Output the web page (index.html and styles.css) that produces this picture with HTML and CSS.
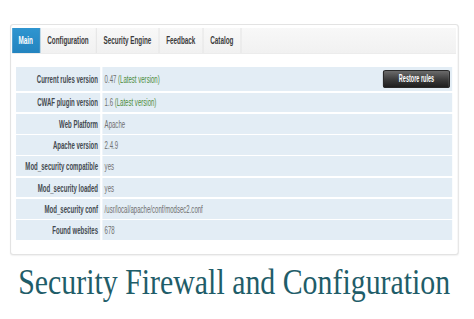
FILE: index.html
```html
<!DOCTYPE html>
<html>
<head>
<meta charset="utf-8">
<link rel="stylesheet" href="styles.css">
</head>
<body>
<div class="frame">
  <div class="panel">
    <div class="tabs">
      <div class="tab active">Main</div>
      <div class="tab">Configuration</div>
      <div class="tab">Security Engine</div>
      <div class="tab">Feedback</div>
      <div class="tab">Catalog</div>
      <div class="tab-fill"></div>
    </div>
    <div class="content">
      <div class="info">
        <div class="label first">Current rules version</div>
        <div class="value first"><span>0.47 <span class="ok">(Latest version)</span></span><button class="btn">Restore rules</button></div>
        <div class="label">CWAF plugin version</div>
        <div class="value">1.6 <span class="ok">&nbsp;(Latest version)</span></div>
        <div class="label">Web Platform</div>
        <div class="value">Apache</div>
        <div class="label">Apache version</div>
        <div class="value">2.4.9</div>
        <div class="label">Mod_security compatible</div>
        <div class="value">yes</div>
        <div class="label">Mod_security loaded</div>
        <div class="value">yes</div>
        <div class="label">Mod_security conf</div>
        <div class="value">/usr/local/apache/conf/modsec2.conf</div>
        <div class="label">Found websites</div>
        <div class="value">678</div>
      </div>
    </div>
  </div>
</div>
<h1 class="title"><span class="title-text">Security Firewall and Configuration</span></h1>
</body>
</html>
```

FILE: styles.css
```css
html, body {
  margin: 0;
  padding: 0;
  background: #ffffff;
  overflow: hidden;
}

body {
  padding: 24px 15px 0 10px;
  font-family: "Liberation Sans", Arial, sans-serif;
}

.frame {
  width: 816px;
  transform: scaleX(0.55);
  transform-origin: 0 0;
}

.panel {
  box-sizing: border-box;
  width: 816px;
  border-style: solid;
  border-color: #e3e3e3;
  border-width: 1px 2px;
  border-radius: 6px / 3px;
  padding: 3px 3px 0 2px;
  background: #fff;
  box-shadow: 0 1px 2px rgba(0, 0, 0, 0.06);
}

.tabs {
  display: flex;
  height: 26px;
  background: linear-gradient(#f8f8f8, #f1f1f1);
  border-bottom: 1px solid #ececec;
  box-sizing: border-box;
}

.tab {
  padding: 0 12.5px;
  font-size: 11.5px;
  font-weight: bold;
  line-height: 25px;
  color: #3b3b3b;
  border-right: 2px solid #e6e6e6;
  white-space: nowrap;
}

.tab.active {
  padding: 0 11.5px;
  background: linear-gradient(#2f95d0, #2384bf);
  color: #ffffff;
  border-right-color: #2384bf;
}

.tab-fill {
  flex: 1;
}

.content {
  padding: 13px 7px 14px 7px;
}

.info {
  display: grid;
  grid-template-columns: 153px 1fr;
  grid-template-rows: 24px repeat(7, 19.8px);
  column-gap: 4px;
  row-gap: 1.5px;
  font-size: 11px;
}

.label, .value {
  background: #e3edf5;
  display: flex;
  align-items: center;
  white-space: nowrap;
}

.label {
  justify-content: flex-end;
  padding-right: 4px;
  font-weight: bold;
  color: #444a50;
}

.value {
  padding-left: 4px;
  color: #6f6f6f;
}

.value.first {
  justify-content: space-between;
  padding-right: 4px;
}

.ok {
  color: #4b8b3b;
}

.btn {
  box-sizing: border-box;
  width: 122px;
  height: 18px;
  padding: 0;
  border-style: solid;
  border-color: #2a2a2a;
  border-width: 1px 2px;
  border-radius: 5px / 2px;
  background: linear-gradient(#6b6b6b, #3a3a3a 55%, #1e1e1e);
  color: #ffffff;
  font-family: "Liberation Sans", Arial, sans-serif;
  font-size: 10px;
  font-weight: bold;
  line-height: 16px;
}

.title {
  display: flex;
  justify-content: center;
  width: 449px;
  margin: 8px 0 0 0;
  font-family: "Liberation Serif", "Times New Roman", serif;
  font-size: 35px;
  font-weight: normal;
  line-height: 40px;
  color: #1f5d69;
  white-space: nowrap;
}

.title-text {
  flex: none;
  transform: scaleX(0.853);
  transform-origin: 50% 0;
}
```
